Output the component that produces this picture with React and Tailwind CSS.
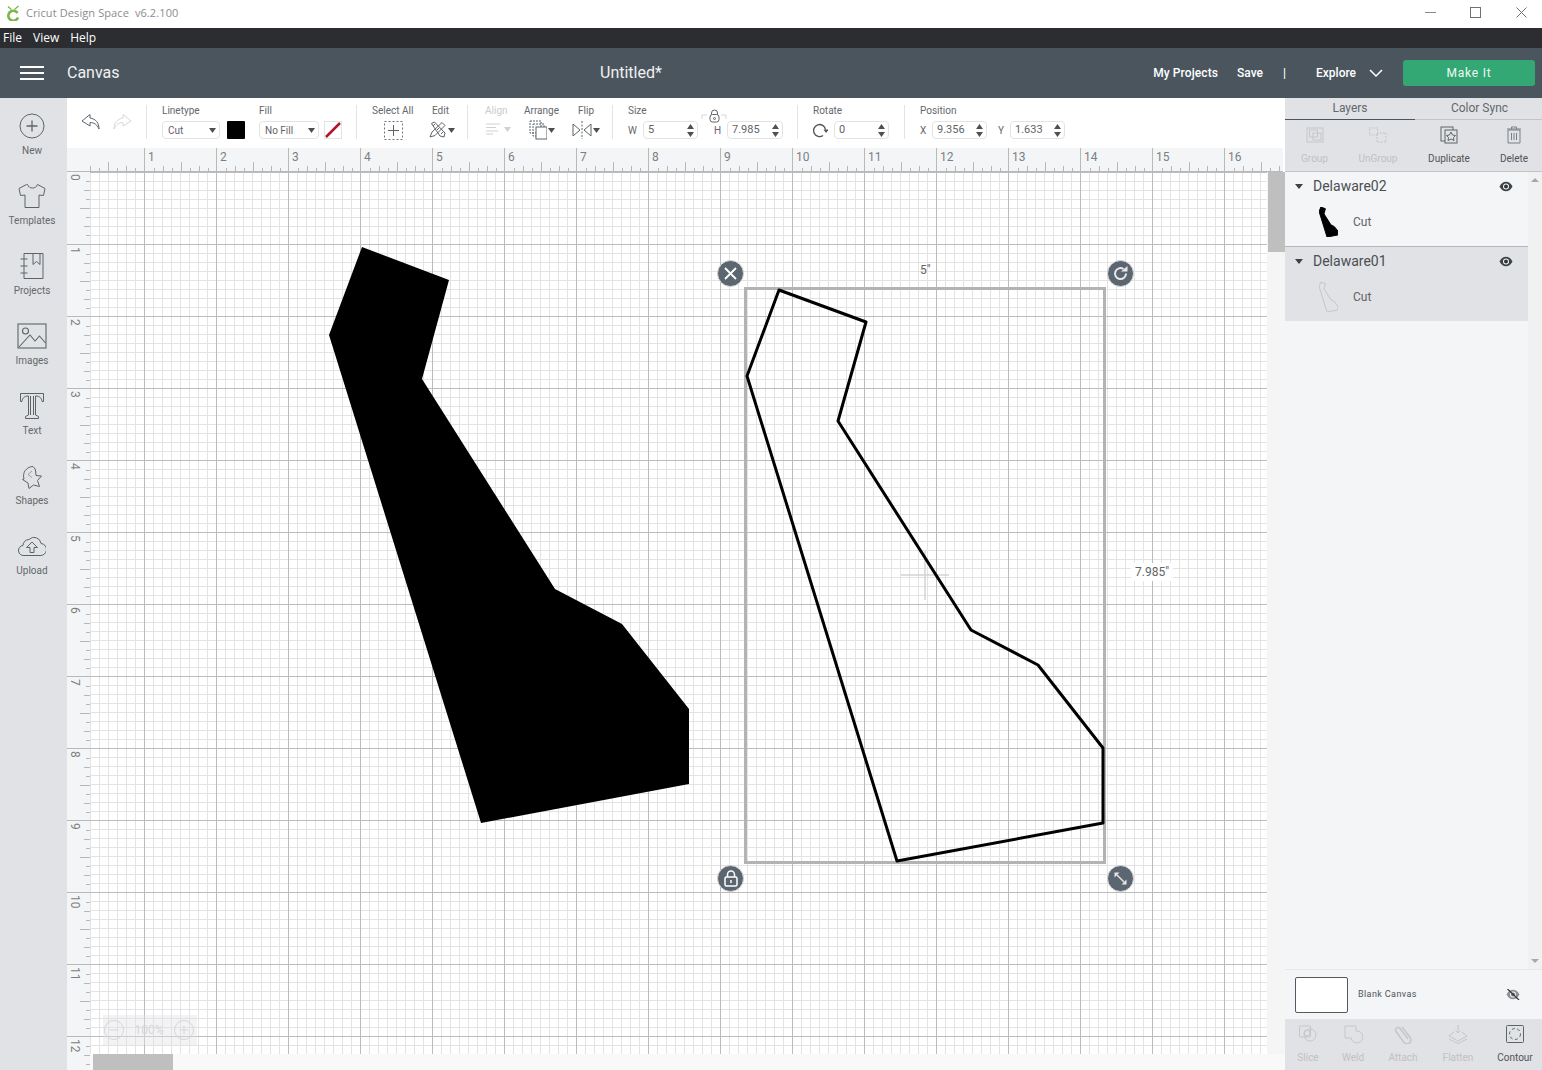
import React from "react";

const Ic = ({ w = 24, h = 24, vb, c = "#5d6468", sw = 1, children, className = "" }) => (
  <svg width={w} height={h} viewBox={vb || `0 0 ${w} ${h}`} fill="none" stroke={c} strokeWidth={sw} className={className}>
    {children}
  </svg>
);

const Caret = ({ c = "#4a4f53" }) => (
  <svg width="7" height="5" viewBox="0 0 7 5" className="ml-[1px]"><path d="M0 0h7L3.500 5z" fill={c} /></svg>
);

const Spin = () => (
  <svg width="7" height="13" viewBox="0 0 7 13"><path d="M3.500 0L7 5H0z M0 8h7l-3.500 5z" fill="#4c5156" /></svg>
);

const Sep = () => <div className="w-px h-[34px] bg-[#e2e3e5] shrink-0" />;

const Num = ({ v, w }) => (
  <div className={`${w} h-[18px] border border-[#e2e3e5] rounded-sm flex items-center justify-between pl-[4px] pr-[3px] text-[11px] text-[#5f6468]`}>
    <span className="pt-[1px]">{v}</span>
    <Spin />
  </div>
);

const Sel = ({ v, w }) => (
  <div className={`${w} h-[18px] border border-[#e2e3e5] rounded-sm flex items-center justify-between pl-[5px] pr-[3px] text-[10px] text-[#5f6468]`}>
    <span>{v}</span>
    <Caret />
  </div>
);

const Lab = ({ children, off }) => (
  <div className={`text-[10px] leading-[12px] h-[12px] whitespace-nowrap ${off ? "text-[#c9cbce]" : "text-[#63686c]"}`}>{children}</div>
);

const Side = ({ label, children }) => (
  <div className="h-[70px] flex flex-col items-center">
    <div className="h-[34px] flex items-center justify-center">{children}</div>
    <div className="text-[10px] leading-[12px] mt-[2px] text-[#63686c]">{label}</div>
  </div>
);

function Sidebar() {
  const c = "#5d6468";
  return (
    <div className="w-[67px] shrink-0 bg-[#e1e2e5] pt-[11px] pr-[3px] flex flex-col">
      <Side label="New">
        <Ic w={26} h={26} c={c}><circle cx="13" cy="13" r="12" /><path d="M13 7.500v11M7.500 13h11" strokeWidth="1.300" /></Ic>
      </Side>
      <Side label="Templates">
        <Ic w={30} h={28} c={c}><path d="M9.500 2.500L2 6.500l1.500 7 4.500-.5v12.500h14V13l4.500.5 1.500-7-7.500-4c-1 2.500-2.500 3.500-5 3.500s-4-1-5-3.500z" /></Ic>
      </Side>
      <Side label="Projects">
        <Ic w={26} h={28} c={c}><path d="M5 1.500h19v25H5zM1.500 7h7M1.500 14h7M1.500 21h7M14 1.500v11l3.500-3 3.500 3v-11" /></Ic>
      </Side>
      <Side label="Images">
        <Ic w={30} h={26} c={c} sw={1.1}><rect x="1" y="1" width="28" height="24" /><circle cx="8.500" cy="8" r="3" /><path d="M2 24l11-12 5 6 4.500-5 6 7" /></Ic>
      </Side>
      <Side label="Text">
        <Ic w={26} h={28} c={c}><path d="M1.500 1.500h23v8h-1.500c-.5-3.500-2-5.500-6.500-5.500v19l3 1.500v2h-13v-2l3-1.500V4C5 4 3.500 6 3 9.500H1.500zM11.500 4v19M14.500 4v19" /></Ic>
      </Side>
      <Side label="Shapes">
        <Ic w={26} h={26} c={c}><path d="M14 3.500A9.500 9.500 0 0 0 5 16l-1.500 .5 5.500 3.500 1 5.500 4.500-3.500 6 1.500-2-6 4-4.500-5.500-.5-.5-5.500A9 9 0 0 0 14 3.500z" /><path d="M13 8l-4 3.500 4 3" opacity=".5" /></Ic>
      </Side>
      <Side label="Upload">
        <Ic w={28} h={22} c={c}><path d="M7 20.500H6a5 5 0 0 1-1-10 6 6 0 0 1 6-6 7 7 0 0 1 12 4 6 6 0 0 1-1 12z" /><path d="M14 7l-5.500 5.500h3.500v5h4v-5h3.500z" /></Ic>
      </Side>
    </div>
  );
}

function Toolbar() {
  return (
    <div className="h-[50px] bg-white flex items-center shrink-0 pb-[2px]">
      <div className="w-[79px] shrink-0 flex items-center pl-[13px] gap-[9px]">
        <Ic w={22} h={20} c="#5d6468"><path d="M10 2.500L2 9l8 5v-3.500c4 0 7 2 9 6.500 0-6-3-10-9-11z" /></Ic>
        <Ic w={22} h={20} c="#d5d7d9"><path d="M12 2.500L20 9l-8 5v-3.500c-4 0-7 2-9 6.500 0-6 3-10 9-11z" /></Ic>
      </div>
      <Sep />
      <div className="w-[209px] shrink-0 flex pl-[15px] h-[34px]">
        <div className="w-[97px]">
          <Lab>Linetype</Lab>
          <div className="flex items-center gap-[7px] mt-[4px]">
            <Sel v="Cut" w="w-[58px]" />
            <div className="w-[18px] h-[18px] bg-black rounded-[1px]" />
          </div>
        </div>
        <div>
          <Lab>Fill</Lab>
          <div className="flex items-center gap-[5px] mt-[4px]">
            <Sel v="No Fill" w="w-[60px]" />
            <svg width="18" height="18" viewBox="0 0 18 18"><rect x=".5" y=".5" width="17" height="17" fill="none" stroke="#e2e3e5" /><path d="M2 16L16 2" stroke="#b0142c" strokeWidth="2.500" /></svg>
          </div>
        </div>
      </div>
      <Sep />
      <div className="w-[110px] shrink-0 flex pl-[15px] h-[34px]">
        <div className="w-[60px]">
          <Lab>Select All</Lab>
          <svg width="19" height="19" viewBox="0 0 19 19" className="mt-[4px] ml-[12px]"><rect x=".5" y=".5" width="18" height="18" fill="none" stroke="#6d7276" strokeDasharray="2 2" /><path d="M9.500 4v11M4 9.500h11" stroke="#5d6468" /></svg>
        </div>
        <div className="flex flex-col">
          <Lab>Edit</Lab>
          <div className="flex items-center mt-[4px] -ml-[4px]">
            <Ic w={19} h={18} c="#5d6468"><path d="M2 16l2-5L14 1.500l3 3L7 14.500zM3.500 2.500l3-1.500 10.500 11-1 4-4-1zM5 5l2-2M9 9l2-2M13 13l2-2" /></Ic>
            <Caret />
          </div>
        </div>
      </div>
      <Sep />
      <div className="w-[144px] shrink-0 flex pl-[17px] h-[34px]">
        <div className="w-[39px]">
          <Lab off>Align</Lab>
          <div className="flex items-center mt-[6px] gap-[2px]">
            <Ic w={16} h={12} c="#cfd1d3"><path d="M1 1h14M1 4.500h10M1 8h12M1 11h7" /></Ic>
            <Caret c="#cfd1d3" />
          </div>
        </div>
        <div className="w-[54px]">
          <Lab>Arrange</Lab>
          <div className="flex items-center mt-[3px] ml-[5px]">
            <Ic w={18} h={20} c="#5d6468"><rect x="1" y="1" width="11" height="12" strokeDasharray="2 1" /><rect x="4" y="4" width="11" height="12" strokeDasharray="2 1" /><rect x="7" y="7" width="11" height="12" fill="#fff" /></Ic>
            <Caret />
          </div>
        </div>
        <div>
          <Lab>Flip</Lab>
          <div className="flex items-center mt-[4px] -ml-[6px]">
            <Ic w={20} h={18} c="#5d6468"><path d="M1 3l7 6-7 6zM19 3l-7 6 7 6z" /><path d="M10 0v18" strokeDasharray="2 1.500" /></Ic>
            <Caret />
          </div>
        </div>
      </div>
      <Sep />
      <div className="w-[184px] shrink-0 pl-[15px] h-[34px] relative">
        <Lab>Size</Lab>
        <div className="flex items-center mt-[4px] text-[10px] text-[#63686c]">
          <span className="w-[15px]">W</span>
          <Num v="5" w="w-[55px]" />
          <span className="ml-[16px] w-[13px]">H</span>
          <Num v="7.985" w="w-[56px]" />
        </div>
        <div className="absolute left-[88px] top-[4px]">
          <Ic w={26} h={14} c="#5d6468"><path d="M1 10V6h5M20 6h5v4" stroke="#d5d7d9" /><rect x="9" y="5.500" width="9" height="7.500" rx="2.500" /><path d="M10.500 5.500V4a3 3 0 0 1 6 0v1.500" /><circle cx="13.500" cy="9.500" r="1" /></Ic>
        </div>
      </div>
      <Sep />
      <div className="w-[106px] shrink-0 pl-[15px] h-[34px]">
        <Lab>Rotate</Lab>
        <div className="flex items-center mt-[4px] gap-[6px]">
          <Ic w={15} h={16} c="#4d5357" sw={1.4}><path d="M12.500 7.500A6 6 0 1 0 10 13.500" /><path d="M10.500 7.500h5l-2.500 3.500z" fill="#4d5357" stroke="none" /></Ic>
          <Num v="0" w="w-[55px]" />
        </div>
      </div>
      <Sep />
      <div className="pl-[15px] h-[34px]">
        <Lab>Position</Lab>
        <div className="flex items-center mt-[4px] text-[10px] text-[#63686c]">
          <span className="w-[12px]">X</span>
          <Num v="9.356" w="w-[55px]" />
          <span className="ml-[11px] w-[12px]">Y</span>
          <Num v="1.633" w="w-[55px]" />
        </div>
      </div>
    </div>
  );
}

const Tick = ({ vertical }) => {
  const hs = [0, 4, 6, 4, 10, 4, 6, 4];
  return vertical ? (
    <svg width="23" height="72" className="absolute left-0 top-0">
      {hs.map((h, i) => (i ? <line key={i} x1={23 - h} x2="23" y1={i * 9 + 0.5} y2={i * 9 + 0.5} stroke="#b4b6b8" /> : null))}
    </svg>
  ) : (
    <svg width="72" height="24" className="absolute left-0 top-0">
      {hs.map((h, i) => (i ? <line key={i} y1={24 - h} y2="24" x1={i * 9 + 0.5} x2={i * 9 + 0.5} stroke="#b4b6b8" /> : null))}
    </svg>
  );
};

const hLabels = Array.from({ length: 16 }, (_, i) => i + 1);
const vLabels = Array.from({ length: 13 }, (_, i) => i);

function TopRuler() {
  return (
    <div className="col-span-3 h-[24px] flex overflow-hidden">
      <div className="w-[23px] shrink-0 bg-[#f4f5f7] border-b border-[#b9b9b9]" />
      <div className="w-[54px] shrink-0 relative overflow-hidden bg-[#f4f5f7] border-b border-[#b9b9b9]">
        <div className="absolute -left-[18px] top-0 w-[72px] h-[24px]"><Tick /></div>
      </div>
      {hLabels.map((n) => (
        <div key={n} className={`${n === 16 ? "w-[59px] overflow-hidden" : "w-[72px]"} shrink-0 relative bg-[#f4f5f7] border-l border-b border-[#b9b9b9]`}>
          <Tick />
          <span className="absolute left-[3px] top-[2px] text-[12px] leading-[14px] text-[#7b7f83]">{n}</span>
        </div>
      ))}
    </div>
  );
}

function LeftRuler() {
  return (
    <div className="w-[23px] bg-[#f4f5f7] overflow-hidden row-span-2">
      {vLabels.map((n) => (
        <div key={n} className="h-[72px] relative border-t border-[#b9b9b9] first:border-t-0">
          <Tick vertical />
          <span className="absolute left-[1px] top-[2px] text-[12px] leading-[14px] text-[#7b7f83] [writing-mode:vertical-rl]">{n}</span>
        </div>
      ))}
    </div>
  );
}

const Handle = ({ className, children }) => (
  <div className={`absolute w-[27px] h-[27px] rounded-full bg-[#5c6670] border border-[#d8dadc] flex items-center justify-center ${className}`}>
    {children}
  </div>
);

function Canvas() {
  return (
    <div className="flex-1 min-h-0 grid grid-cols-[23px_1177px_1fr] grid-rows-[24px_882px_16px] bg-white overflow-hidden">
      <TopRuler />
      <LeftRuler />
      <div className="relative overflow-hidden bg-white bg-[linear-gradient(to_right,#bcbcbc_1px,transparent_1px),linear-gradient(to_bottom,#bcbcbc_1px,transparent_1px),linear-gradient(to_right,#e3e3e3_1px,transparent_1px),linear-gradient(to_bottom,#e3e3e3_1px,transparent_1px)] [background-size:72px_72px,72px_72px,9px_9px,9px_9px] [background-position:54px_0,0_0,0_0,0_0]">
        <svg width="1177" height="882" viewBox="90 172 1177 882" className="absolute left-0 top-0">
          <polygon points="362,247 449,280 422,379 555,589 622,624 689,709 689,784 481,823 329,335" fill="#000" />
          <rect x="745.500" y="288.500" width="359" height="574" fill="none" stroke="#b3b3b3" strokeWidth="3" />
          <path d="M901 575h48M925 551v49" stroke="#d4d4d4" strokeWidth="1.500" />
          <polygon points="779,290 866,322 838,421 971,630 1038,665 1103,748 1103,823 897,861 747,376" fill="none" stroke="#000" strokeWidth="3" strokeLinejoin="round" />
        </svg>
        <Handle className="left-[627px] top-[88px]">
          <svg width="15" height="15" viewBox="0 0 15 15"><path d="M2 2l11 11M13 2L2 13" stroke="#fff" strokeWidth="1.800" /></svg>
        </Handle>
        <Handle className="left-[1017px] top-[88px]">
          <svg width="17" height="17" viewBox="0 0 17 17" fill="none"><path d="M14 8.500A5.500 5.500 0 1 1 11.500 4" stroke="#e6e8ea" strokeWidth="2" /><path d="M9 6.500h6.500V1z" fill="#e6e8ea" /></svg>
        </Handle>
        <Handle className="left-[627px] top-[693px]">
          <svg width="16" height="17" viewBox="0 0 16 17" fill="none" stroke="#fff" strokeWidth="1.500"><rect x="2" y="7" width="12" height="9" rx="1.500" /><path d="M4.500 7V4.500a3.500 3.500 0 0 1 7 0V7M8 10v3" /></svg>
        </Handle>
        <Handle className="left-[1017px] top-[693px]">
          <svg width="17" height="17" viewBox="0 0 17 17" fill="none"><path d="M5 5l7 7" stroke="#e6e8ea" strokeWidth="1.400" /><path d="M2.500 2.500h5l-5 5zM14.500 14.500h-5l5-5z" fill="#e6e8ea" /></svg>
        </Handle>
        <div className="absolute left-[830px] top-[91px] text-[12px] leading-[14px] text-[#5f6468]">5"</div>
        <div className="absolute left-[1041px] top-[391px] bg-white px-[4px] text-[12px] leading-[18px] text-[#5f6468]">7.985"</div>
        <div className="absolute left-[13px] top-[843px] w-[94px] h-[30px] bg-[#e1e2e5]/40 flex items-center justify-between pl-[1px] pr-[3px] text-[12px] text-[#d4d6d8]">
          <svg width="20" height="20" viewBox="0 0 20 20" fill="none" stroke="#d4d6d8"><circle cx="10" cy="10" r="9.500" /><path d="M5.500 10h9" /></svg>
          <span>100%</span>
          <svg width="20" height="20" viewBox="0 0 20 20" fill="none" stroke="#d4d6d8"><circle cx="10" cy="10" r="9.500" /><path d="M5.500 10h9M10 5.500v9" /></svg>
        </div>
      </div>
      <div className="bg-[#f5f5f5] row-start-2 col-start-3 pl-px">
        <div className="h-[80px] w-full bg-[#bfbfbf]" />
      </div>
      <div className="col-start-2 col-span-2 row-start-3 bg-[#f9f9f9] pl-[3px]">
        <div className="w-[80px] h-[16px] bg-[#bfbfbf]" />
      </div>
    </div>
  );
}

const Tool = ({ label, w, off, children }) => (
  <div className={`${w} shrink-0 flex flex-col items-center`}>
    <div className="h-[26px] flex items-center justify-center">{children}</div>
    <div className={`text-[10px] leading-[11px] mt-[5px] whitespace-nowrap ${off ? "text-[#bfc1c4]" : "text-[#4f5458]"}`}>{label}</div>
  </div>
);

const Eye = ({ off }) => (
  <svg width="14" height="11" viewBox="0 0 14 11">
    <path d="M.5 5.500C2.500 2 4.500.8 7 .8s4.500 1.200 6.500 4.700C11.500 9 9.500 10.200 7 10.200S2.500 9 .5 5.500z" fill={off ? "#8d9194" : "#3d4246"} />
    <circle cx="7" cy="5.500" r="3" fill="#f4f5f7" />
    <circle cx="7" cy="5.500" r="2" fill={off ? "#6b7074" : "#30353a"} />
    {off ? <path d="M1.500 0L13 11" stroke="#30353a" strokeWidth="1.200" /> : null}
  </svg>
);

const State = ({ fill, stroke }) => (
  <svg width="19" height="30" viewBox="329 247 360 576">
    <polygon points="362,247 449,280 422,379 555,589 622,624 689,709 689,784 481,823 329,335" fill={fill} stroke={stroke} vectorEffect="non-scaling-stroke" />
  </svg>
);

function Layer({ name, active, children }) {
  return (
    <div className={active ? "h-[75px] bg-[#e1e2e5] border-t border-[#b4b6b8]" : "h-[74px]"}>
      <div className="h-[28px] flex items-center pl-[10px]">
        <svg width="8" height="5" viewBox="0 0 8 5"><path d="M0 0h8L4 5z" fill="#3d4246" /></svg>
        <span className="ml-[10px] text-[14px] text-[#4a4f53]">{name}</span>
        <span className="ml-auto mr-[15px] flex"><Eye /></span>
      </div>
      <div className="flex items-center pl-[33px] h-[32px] mt-[6px]">
        <div className="w-[21px] flex justify-center">{children}</div>
        <span className="ml-[14px] text-[12px] text-[#5f6468]">Cut</span>
      </div>
    </div>
  );
}

function RightPanel() {
  const off = "#c4c6c9";
  const on = "#5d6468";
  return (
    <div className="w-[257px] shrink-0 flex flex-col bg-[#f4f5f7]">
      <div className="h-[22px] bg-[#e1e2e5] flex text-[12px] text-[#63686c] border-b border-[#c2c4c6]">
        <div className="w-[130px] text-center leading-[20px] border-b border-[#4b555e] h-[22px]">Layers</div>
        <div className="flex-1 text-center leading-[20px] pl-[2px]">Color Sync</div>
      </div>
      <div className="h-[52px] bg-[#e1e2e5] flex border-b border-[#c2c4c6] pt-[2px]">
        <Tool label="Group" w="w-[59px]" off>
          <Ic w={20} h={18} c={off}><rect x="2" y="2" width="16" height="14" /><rect x="4.500" y="4" width="8" height="7" /><rect x="8" y="7" width="8" height="7" /></Ic>
        </Tool>
        <Tool label="UnGroup" w="w-[68px]" off>
          <Ic w={20} h={18} c={off}><path d="M1.500 2h8v7h-8zM9 7h9v9H9z" strokeDasharray="2 1" /></Ic>
        </Tool>
        <Tool label="Duplicate" w="w-[74px]">
          <Ic w={18} h={18} c={on}><rect x="1" y="1" width="12" height="14" /><rect x="5" y="4" width="12" height="13" fill="#e1e2e5" /><path d="M11 6l1.500 3 3 .5-2 2 .5 3-3-1.500-3 1.500.5-3-2-2 3-.5z" /></Ic>
        </Tool>
        <Tool label="Delete" w="w-[56px]">
          <Ic w={16} h={18} c="#7a7f83"><path d="M2 4h12v13H2zM1 3h14M5.500 3V1h5v2M5.500 7v7M8 7v7M10.500 7v7" /></Ic>
        </Tool>
      </div>
      <div className="flex-1 flex min-h-0 border-b border-[#e6e7e9]">
        <div className="flex-1">
          <Layer name="Delaware02"><State fill="#000" stroke="#000" /></Layer>
          <Layer name="Delaware01" active><State fill="none" stroke="#c4c6c9" /></Layer>
        </div>
        <div className="w-[14px] bg-[#f1f1f1] flex flex-col items-center justify-between py-[6px]">
          <svg width="8" height="4" viewBox="0 0 8 4"><path d="M4 0l4 4H0z" fill="#a6a8aa" /></svg>
          <svg width="8" height="4" viewBox="0 0 8 4"><path d="M0 0h8L4 4z" fill="#a6a8aa" /></svg>
        </div>
      </div>
      <div className="h-[49px] flex items-center pl-[10px] pr-[22px]">
        <div className="w-[53px] h-[36px] bg-white border border-[#55595d] rounded-[2px]" />
        <span className="ml-[10px] text-[9px] text-[#4f5458] tracking-[0.4px]">Blank Canvas</span>
        <span className="ml-auto flex"><Eye off /></span>
      </div>
      <div className="h-[51px] bg-[#e1e2e5] flex pt-[2px]">
        <Tool label="Slice" w="w-[46px]" off>
          <Ic w={20} h={20} c={off}><rect x="1.500" y="2" width="11" height="11" rx="1" /><circle cx="12" cy="11" r="6" /><circle cx="9" cy="9" r="3" /></Ic>
        </Tool>
        <Tool label="Weld" w="w-[44px]" off>
          <Ic w={20} h={20} c={off}><path d="M2 2h11v5a6 6 0 1 1-5 7H2z" /></Ic>
        </Tool>
        <Tool label="Attach" w="w-[56px]" off>
          <Ic w={18} h={20} c={off} sw={1.5}><path d="M14 15L6 4.500a2.500 2.500 0 0 0-4 3l8 11a4 4 0 0 0 6.500-4.500L8 3" /></Ic>
        </Tool>
        <Tool label="Flatten" w="w-[54px]" off>
          <Ic w={20} h={20} c={off}><path d="M10 1v8M7.500 6.500L10 9l2.500-2.500M6 8l-5 4 9 5 9-5-5-4M1 15l9 4.500 9-4.500" /></Ic>
        </Tool>
        <Tool label="Contour" w="w-[60px]">
          <Ic w={18} h={18} c={on}><rect x=".5" y=".5" width="17" height="17" rx="1" /><circle cx="9" cy="9" r="5.500" strokeDasharray="3 2.500" /></Ic>
        </Tool>
      </div>
    </div>
  );
}

export default function App() {
  return (
    <div className="w-[1542px] h-[1070px] overflow-hidden flex flex-col bg-white [font-family:Roboto,sans-serif]">
      <div className="h-[28px] shrink-0 flex items-center bg-white [font-family:'Open_Sans',sans-serif]">
        <svg width="15" height="16" viewBox="0 0 15 16" className="ml-[6px] mb-[2px]" fill="none">
          <path d="M11.500 8A5 5 0 1 0 12 12.500" stroke="#7ab648" strokeWidth="2.600" />
          <path d="M2 1.500l3.500 3M8.500 4.500l4-3.500" stroke="#7ab648" strokeWidth="1.300" />
        </svg>
        <span className="ml-[5px] mb-[2px] text-[11px] tracking-[0.1px] text-[#8a8d90]">Cricut Design Space&nbsp; v6.2.100</span>
        <div className="ml-auto flex items-center mb-[4px]">
          <svg width="11" height="11" viewBox="0 0 11 11" className="mr-[34px]"><path d="M0 5.500h11" stroke="#8a8d90" /></svg>
          <svg width="11" height="11" viewBox="0 0 11 11" className="mr-[35px]"><rect x=".5" y=".5" width="10" height="10" fill="none" stroke="#6f7275" /></svg>
          <svg width="11" height="11" viewBox="0 0 11 11" className="mr-[15px]"><path d="M.5.5l10 10M10.500.5l-10 10" stroke="#6f7275" /></svg>
        </div>
      </div>
      <div className="h-[20px] shrink-0 bg-[#2b2d30] flex items-center pl-[3px] gap-[11px] text-[12px] text-white [font-family:'Open_Sans',sans-serif]">
        <span>File</span><span>View</span><span>Help</span>
      </div>
      <div className="h-[50px] shrink-0 bg-[#4b555e] flex items-center text-white relative">
        <div className="ml-[20px] w-[24px] flex flex-col gap-[4px]">
          <div className="h-[2px] bg-white" /><div className="h-[2px] bg-white" /><div className="h-[2px] bg-white" />
        </div>
        <span className="ml-[23px] text-[16px] text-[#f0f1f2]">Canvas</span>
        <span className="absolute left-[600px] text-[16px] text-[#f0f1f2]">Untitled*</span>
        <div className="ml-auto flex items-center text-[12px] font-medium">
          <span className="tracking-[0.1px]">My Projects</span>
          <span className="ml-[19px]">Save</span>
          <span className="ml-[20px]">|</span>
          <span className="ml-[30px]">Explore</span>
          <svg width="14" height="8" viewBox="0 0 14 8" className="ml-[13px]" fill="none"><path d="M1 1l6 6 6-6" stroke="#fff" strokeWidth="1.500" /></svg>
          <div className="ml-[20px] mr-[7px] w-[132px] h-[26px] bg-[#33a875] rounded-[3px] flex items-center justify-center tracking-[0.8px] text-[12px] font-normal text-[#eef8f3]">Make It</div>
        </div>
      </div>
      <div className="flex-1 min-h-0 flex">
        <Sidebar />
        <div className="w-[1218px] shrink-0 flex flex-col min-h-0">
          <Toolbar />
          <Canvas />
        </div>
        <RightPanel />
      </div>
    </div>
  );
}
